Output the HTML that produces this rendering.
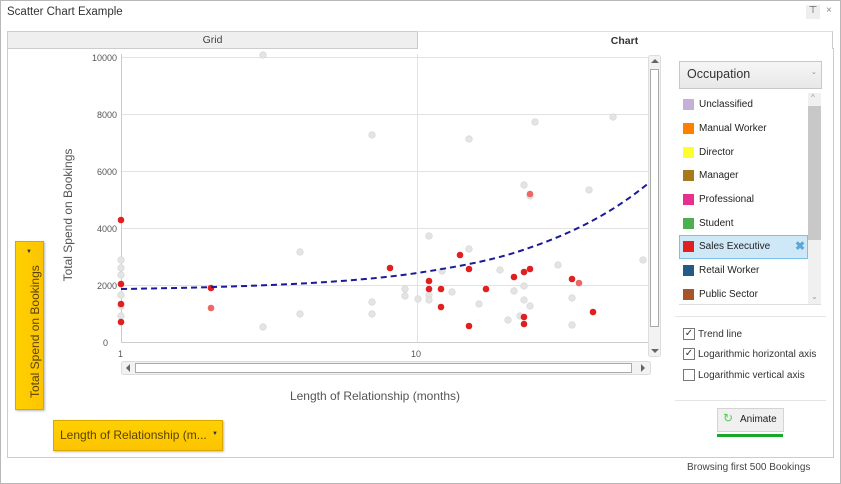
<!DOCTYPE html>
<html><head><meta charset="utf-8"><style>
body{margin:0;width:841px;height:484px;background:#fff;font-family:"Liberation Sans",sans-serif;position:relative;overflow:hidden;color:#333}
.abs{position:absolute}
.item{position:absolute;left:683px;font-size:10px;color:#222}
.sw{position:absolute;left:0;top:0;width:11px;height:11px}
.lbl{position:absolute;left:16px;top:0px;white-space:nowrap}
.cb{position:absolute;width:10px;height:10px;border:1px solid #777;background:#fff;font-size:10px;line-height:10px;text-align:center}
</style></head><body>
<div class="abs" style="left:0;top:0;width:839px;height:482px;border:1px solid #b8b8b8"></div>
<div class="abs" style="left:7px;top:6px;font-size:11.5px;color:#333">Scatter Chart Example</div>
<div class="abs" style="left:806px;top:5px;width:14px;height:14px;background:#eee;font-size:10px;text-align:center;color:#555">⊤</div>
<div class="abs" style="left:826px;top:5px;font-size:10px;color:#888">×</div>
<!-- tabs -->
<div class="abs" style="left:7px;top:31px;width:409px;height:16px;background:#efefef;border:1px solid #ccc;font-size:10.5px;text-align:center;line-height:17px;color:#444">Grid</div>
<div class="abs" style="left:417px;top:31px;width:415px;height:17px;border-top:1px solid #ddd;border-right:1px solid #ccc;font-size:10.5px;font-weight:bold;text-align:center;line-height:18px;color:#333">Chart</div>
<div class="abs" style="left:7px;top:48px;width:825px;height:409px;border:1px solid #ccc;border-top:none"></div>
<div class="abs" style="left:687px;top:462px;font-size:10px;color:#444">Browsing first 500 Bookings</div>
<!-- chart -->
<svg class="abs" style="left:0;top:0" width="841" height="484">
<g stroke="#e2e2e2" stroke-width="1">
<line x1="121" y1="57.5" x2="650" y2="57.5"/><line x1="121" y1="114.5" x2="650" y2="114.5"/><line x1="121" y1="171.5" x2="650" y2="171.5"/><line x1="121" y1="228.5" x2="650" y2="228.5"/><line x1="121" y1="285.5" x2="650" y2="285.5"/>
<line x1="417.5" y1="54" x2="417.5" y2="343"/>
</g>
<line x1="121.5" y1="54" x2="121.5" y2="343" stroke="#ccc"/>
<line x1="121" y1="342.5" x2="650" y2="342.5" stroke="#ccc"/>
<g font-size="9" fill="#555" text-anchor="end" font-family="Liberation Sans">
<text x="117" y="61">10000</text><text x="117" y="118">8000</text><text x="117" y="175">6000</text><text x="117" y="232">4000</text><text x="117" y="289">2000</text><text x="108" y="346">0</text>
</g>
<g font-size="9" fill="#555" font-family="Liberation Sans"><text x="118" y="357">1</text><text x="411" y="357">10</text></g>
<text transform="translate(72,215) rotate(-90)" text-anchor="middle" font-size="12" fill="#555" font-family="Liberation Sans">Total Spend on Bookings</text>
<text x="375" y="400" text-anchor="middle" font-size="12" fill="#555" font-family="Liberation Sans">Length of Relationship (months)</text>
<g fill="#e4e4e4" stroke="#d4d4d4" stroke-width="0.6">
<circle cx="263" cy="55" r="3.3"/><circle cx="372" cy="135" r="3.3"/><circle cx="469" cy="139" r="3.3"/><circle cx="535" cy="122" r="3.3"/><circle cx="613" cy="117" r="3.3"/><circle cx="524" cy="185" r="3.3"/><circle cx="530" cy="196" r="3.3"/><circle cx="589" cy="190" r="3.3"/><circle cx="429" cy="236" r="3.3"/><circle cx="469" cy="249" r="3.3"/><circle cx="300" cy="252" r="3.3"/><circle cx="558" cy="265" r="3.3"/><circle cx="643" cy="260" r="3.3"/><circle cx="500" cy="270" r="3.3"/><circle cx="442" cy="271" r="3.3"/><circle cx="405" cy="289" r="3.3"/><circle cx="405" cy="296" r="3.3"/><circle cx="418" cy="299" r="3.3"/><circle cx="429" cy="295" r="3.3"/><circle cx="429" cy="300" r="3.3"/><circle cx="452" cy="292" r="3.3"/><circle cx="514" cy="291" r="3.3"/><circle cx="524" cy="286" r="3.3"/><circle cx="524" cy="300" r="3.3"/><circle cx="530" cy="306" r="3.3"/><circle cx="479" cy="304" r="3.3"/><circle cx="508" cy="320" r="3.3"/><circle cx="520" cy="316" r="3.3"/><circle cx="572" cy="298" r="3.3"/><circle cx="572" cy="325" r="3.3"/><circle cx="372" cy="302" r="3.3"/><circle cx="372" cy="314" r="3.3"/><circle cx="300" cy="314" r="3.3"/><circle cx="263" cy="327" r="3.3"/>
<circle cx="121" cy="260" r="3.3"/><circle cx="121" cy="268" r="3.3"/><circle cx="121" cy="275" r="3.3"/><circle cx="121" cy="295" r="3.3"/><circle cx="121" cy="306" r="3.3"/><circle cx="121" cy="316" r="3.3"/>
</g>
<g fill="#e02020">
<circle cx="121" cy="220" r="3.3"/><circle cx="121" cy="284" r="3.3"/><circle cx="121" cy="304" r="3.3"/><circle cx="121" cy="322" r="3.3"/><circle cx="211" cy="288" r="3.3"/><circle cx="211" cy="308" r="3.3" fill="#e66"/><circle cx="390" cy="268" r="3.3"/><circle cx="460" cy="255" r="3.3"/><circle cx="469" cy="269" r="3.3"/><circle cx="429" cy="281" r="3.3"/><circle cx="429" cy="289" r="3.3"/><circle cx="441" cy="289" r="3.3"/><circle cx="441" cy="307" r="3.3"/><circle cx="469" cy="326" r="3.3"/><circle cx="486" cy="289" r="3.3"/><circle cx="514" cy="277" r="3.3"/><circle cx="524" cy="272" r="3.3"/><circle cx="530" cy="269" r="3.3"/><circle cx="524" cy="317" r="3.3"/><circle cx="524" cy="324" r="3.3"/><circle cx="572" cy="279" r="3.3"/><circle cx="579" cy="283" r="3.3" fill="#e66"/><circle cx="593" cy="312" r="3.3"/><circle cx="530" cy="194" r="3.3" fill="#e66"/>
</g>
<path d="M121 289 C250 287 350 283 417 273 C470 265 500 258 526 249 C570 234 610 215 650 182" fill="none" stroke="#1a1a9a" stroke-width="2" stroke-dasharray="6,4"/>
<!-- v scroll -->
<rect x="648.5" y="55.5" width="12" height="301" rx="2" fill="#f2f2f2" stroke="#ddd"/>
<rect x="650.5" y="69.5" width="8" height="257" fill="#fff" stroke="#aaa"/>
<path d="M651 63 L655 59 L659 63Z M651 349 L655 353 L659 349Z" fill="#666"/>
<!-- h scroll -->
<rect x="121.5" y="361.5" width="529" height="13" rx="2" fill="#f2f2f2" stroke="#ddd"/>
<rect x="135.5" y="363.5" width="496" height="9" fill="#fff" stroke="#aaa"/>
<path d="M130 364 L126 368 L130 372Z M641 364 L645 368 L641 372Z" fill="#666"/>
</svg>
<!-- yellow buttons -->
<div class="abs" style="left:15px;top:241px;width:27px;height:167px;background:linear-gradient(90deg,#ffd000,#fcc400);border:1px solid #d9a800;box-shadow:1px 1px 2px #bbb"></div>
<div class="abs" style="left:29px;top:249px;font-size:6px;color:#333;transform:translateX(-50%)">▼</div>
<div class="abs" style="left:28px;top:398px;font-size:12px;color:#5a4200;transform-origin:0 0;transform:rotate(-90deg);white-space:nowrap">Total Spend on Bookings</div>
<div class="abs" style="left:53px;top:420px;width:168px;height:29px;background:linear-gradient(#ffd000,#fcc400);border:1px solid #d9a800;box-shadow:1px 1px 2px #bbb"></div>
<div class="abs" style="left:60px;top:428px;font-size:12px;color:#5a4200">Length of Relationship (m...</div>
<div class="abs" style="left:212px;top:431px;font-size:6px;color:#333">▼</div>
<!-- right panel -->
<div class="abs" style="left:679px;top:61px;width:141px;height:26px;background:linear-gradient(#f6f6f6,#e8e8e8);border:1px solid #c8c8c8"></div>
<div class="abs" style="left:687px;top:67px;font-size:12.5px;color:#333">Occupation</div>
<div class="abs" style="left:811px;top:68px;font-size:7px;color:#888">⌄</div>
<div class="abs" style="left:679px;top:93px;width:142px;height:211px;border-bottom:1px solid #ddd"></div>
<div class="abs" style="left:808px;top:93px;width:13px;height:211px;background:#f0f0f0"></div>
<div class="abs" style="left:808px;top:106px;width:13px;height:134px;background:#c8c8c8"></div>
<div class="abs" style="left:811px;top:93px;font-size:8px;color:#999">^</div>
<div class="abs" style="left:811px;top:292px;font-size:8px;color:#999">⌄</div>
<div class="abs" style="left:679px;top:235px;width:127px;height:22px;background:#cfe8f7;border:1px solid #7cc0e8"></div>
<div class="abs" style="left:795px;top:239px;font-size:12px;color:#5aa8d8;font-weight:bold">✖</div>
<div class="item" style="top:99px"><div class="sw" style="background:#c4b0d8"></div><div class="lbl">Unclassified</div></div>
<div class="item" style="top:123px"><div class="sw" style="background:#ff8000"></div><div class="lbl">Manual Worker</div></div>
<div class="item" style="top:147px"><div class="sw" style="background:#ffff30"></div><div class="lbl">Director</div></div>
<div class="item" style="top:170px"><div class="sw" style="background:#a8781c"></div><div class="lbl">Manager</div></div>
<div class="item" style="top:194px"><div class="sw" style="background:#e83090"></div><div class="lbl">Professional</div></div>
<div class="item" style="top:218px"><div class="sw" style="background:#4caf50"></div><div class="lbl">Student</div></div>
<div class="item" style="top:241px"><div class="sw" style="background:#e02020"></div><div class="lbl">Sales Executive</div></div>
<div class="item" style="top:265px"><div class="sw" style="background:#245a88"></div><div class="lbl">Retail Worker</div></div>
<div class="item" style="top:289px"><div class="sw" style="background:#a8542a"></div><div class="lbl">Public Sector</div></div>
<div class="abs" style="left:675px;top:316px;width:151px;height:1px;background:#e4e4e4"></div>
<div class="cb" style="left:683px;top:328px">✓</div><div class="abs" style="left:698px;top:329px;font-size:10px">Trend line</div>
<div class="cb" style="left:683px;top:348px">✓</div><div class="abs" style="left:698px;top:349px;font-size:10px">Logarithmic horizontal axis</div>
<div class="cb" style="left:683px;top:369px"></div><div class="abs" style="left:698px;top:370px;font-size:10px">Logarithmic vertical axis</div>
<div class="abs" style="left:675px;top:400px;width:151px;height:1px;background:#e4e4e4"></div>
<div class="abs" style="left:717px;top:408px;width:65px;height:22px;background:#f0f0f0;border:1px solid #d4d4d4"></div>
<div class="abs" style="left:723px;top:411px;font-size:12px;color:#5c5">↻</div>
<div class="abs" style="left:740px;top:414px;font-size:10px;color:#222">Animate</div>
<div class="abs" style="left:717px;top:434px;width:66px;height:3px;background:#1aa82a"></div>
</body></html>
